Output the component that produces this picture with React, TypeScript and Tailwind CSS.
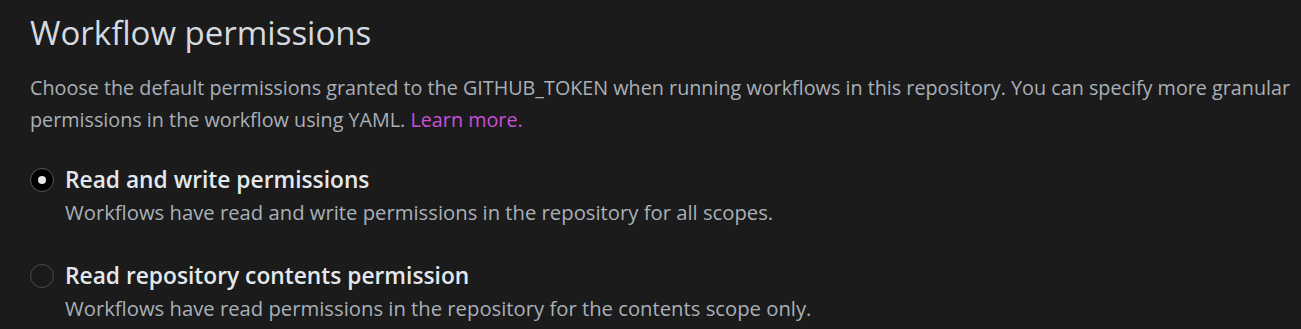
import React from "react";

function Radio({ checked }: { checked: boolean }) {
  return checked ? (
    <span className="flex h-6 w-6 shrink-0 items-center justify-center rounded-full border border-[#5a5a5a] bg-black">
      <span className="block h-2 w-2 rounded-full bg-[#e6e6e6]" />
    </span>
  ) : (
    <span className="block h-6 w-6 shrink-0 rounded-full border border-[#4a4a4a] bg-[#1b1b1b]" />
  );
}

export default function App() {
  return (
    <div
      className="h-[329px] w-[1301px] overflow-hidden bg-[#1b1b1b] pl-[30px] pt-[10px]"
      style={{ fontFamily: '"Open Sans", "Noto Sans", sans-serif' }}
    >
      <h2 className="text-[33px] leading-[46px] font-normal text-[#d4dae0]">Workflow permissions</h2>
      <p className="mt-[16px] w-[1271px] text-[19.75px] leading-[32px] text-[#a9b0b8]">
        Choose the default permissions granted to the GITHUB_TOKEN when running workflows in this repository. You can specify more granular permissions in the workflow using YAML.{" "}
        <a className="text-[#c94fd8]">Learn more.</a>
      </p>
      <div className="mt-[28px] flex flex-col gap-[31px]">
        <div className="flex items-start gap-[11px]">
          <div className="pt-[4px]"><Radio checked /></div>
          <div>
            <div className="text-[22.75px] leading-[32px] font-semibold text-[#e3e8ed]">Read and write permissions</div>
            <div className="text-[20.25px] leading-[33px] text-[#a9b0b8]">Workflows have read and write permissions in the repository for all scopes.</div>
          </div>
        </div>
        <div className="flex items-start gap-[11px]">
          <div className="pt-[4px]"><Radio checked={false} /></div>
          <div>
            <div className="text-[22.75px] leading-[32px] font-semibold text-[#e3e8ed]">Read repository contents permission</div>
            <div className="text-[20.25px] leading-[33px] text-[#a9b0b8]">Workflows have read permissions in the repository for the contents scope only.</div>
          </div>
        </div>
      </div>
    </div>
  );
}
